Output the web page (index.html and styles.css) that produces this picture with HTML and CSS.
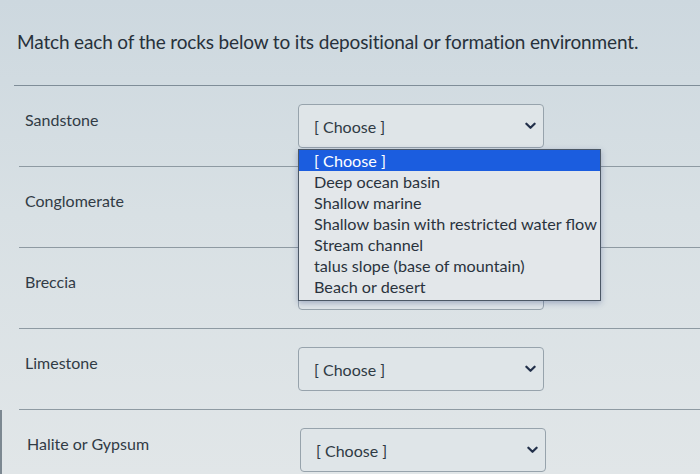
FILE: index.html
```html
<!DOCTYPE html>
<html>
<head>
<meta charset="utf-8">
<link rel="stylesheet" href="styles.css">
</head>
<body>
<div class="page">
  <div class="header">
    <p class="title">Match each of the rocks below to its depositional or formation environment.</p>
  </div>
  <div class="rows">
    <div class="row">
      <div class="label">Sandstone</div>
      <div class="select-wrap">
        <div class="select"><span>[ Choose ]</span><svg class="chev" viewBox="0 0 12 8" width="11" height="8"><path d="M1.5 1.5 L6 6 L10.5 1.5" fill="none" stroke="#22304a" stroke-width="2.4" stroke-linecap="round" stroke-linejoin="round"/></svg></div>
        <ul class="menu">
          <li class="active">[ Choose ]</li>
          <li>Deep ocean basin</li>
          <li>Shallow marine</li>
          <li>Shallow basin with restricted water flow</li>
          <li>Stream channel</li>
          <li>talus slope (base of mountain)</li>
          <li>Beach or desert</li>
        </ul>
      </div>
    </div>
    <div class="row">
      <div class="label">Conglomerate</div>
      <div class="select-wrap">
        <div class="select covered"><span>[ Choose ]</span><svg class="chev" viewBox="0 0 12 8" width="11" height="8"><path d="M1.5 1.5 L6 6 L10.5 1.5" fill="none" stroke="#22304a" stroke-width="2.4" stroke-linecap="round" stroke-linejoin="round"/></svg></div>
      </div>
    </div>
    <div class="row">
      <div class="label">Breccia</div>
      <div class="select-wrap">
        <div class="select covered"><span>[ Choose ]</span><svg class="chev" viewBox="0 0 12 8" width="11" height="8"><path d="M1.5 1.5 L6 6 L10.5 1.5" fill="none" stroke="#22304a" stroke-width="2.4" stroke-linecap="round" stroke-linejoin="round"/></svg></div>
      </div>
    </div>
    <div class="row">
      <div class="label">Limestone</div>
      <div class="select-wrap">
        <div class="select"><span>[ Choose ]</span><svg class="chev" viewBox="0 0 12 8" width="11" height="8"><path d="M1.5 1.5 L6 6 L10.5 1.5" fill="none" stroke="#22304a" stroke-width="2.4" stroke-linecap="round" stroke-linejoin="round"/></svg></div>
      </div>
    </div>
    <div class="row">
      <div class="label">Halite or Gypsum</div>
      <div class="select-wrap">
        <div class="select"><span>[ Choose ]</span><svg class="chev" viewBox="0 0 12 8" width="11" height="8"><path d="M1.5 1.5 L6 6 L10.5 1.5" fill="none" stroke="#22304a" stroke-width="2.4" stroke-linecap="round" stroke-linejoin="round"/></svg></div>
      </div>
    </div>
  </div>
</div>
</body>
</html>
```
FILE: styles.css
```css
html, body {
  margin: 0;
  padding: 0;
}
body {
  width: 700px;
  height: 474px;
  overflow: hidden;
  font-family: Lato, "Open Sans", sans-serif;
  color: #2b3540;
  background: linear-gradient(180deg, #cdd8df 0%, #d8e0e4 45%, #e1e6e8 100%);
}
.page {
  width: 700px;
}
.header {
  height: 86px;
  margin-left: 14px;
  border-bottom: 1px solid #7f8d98;
  box-sizing: border-box;
}
.title {
  margin: 0;
  padding: 30px 0 0 3px;
  font-size: 19px;
  line-height: 24px;
  letter-spacing: -0.15px;
  color: #27313b;
}
.rows {
  display: flex;
  flex-direction: column;
}
.row {
  display: flex;
  align-items: flex-start;
  height: 81px;
  margin-left: 19px;
  border-bottom: 1px solid #8e9aa2;
  box-sizing: border-box;
}
.row:last-child {
  border-bottom: none;
  margin-left: 0;
  border-left: 2px solid #7c8891;
  padding-left: 19px;
}
.label {
  width: 279px;
  padding: 24px 0 0 6px;
  box-sizing: border-box;
  font-size: 16px;
  line-height: 20px;
  color: #313b45;
}
.select-wrap {
  position: relative;
  margin-top: 18px;
}
.select {
  display: flex;
  align-items: center;
  justify-content: space-between;
  width: 246px;
  height: 44px;
  padding: 0 7px 0 15px;
  box-sizing: border-box;
  border: 1px solid #97a3ac;
  border-radius: 4px;
  background: #dfe5e8;
  font-size: 16px;
  color: #2f3a44;
}
.select.covered span {
  visibility: hidden;
}
.chev {
  display: block;
}
.menu {
  position: absolute;
  left: 0;
  top: 45px;
  width: 303px;
  margin: 0;
  padding: 0 0 3px 0;
  list-style: none;
  background: #e3e7ea;
  border: 1px solid #4c5866;
  box-shadow: 0 2px 6px rgba(40, 60, 120, 0.35);
  box-sizing: border-box;
  z-index: 5;
}
.menu li {
  height: 21px;
  line-height: 22px;
  padding-left: 15px;
  font-size: 16.2px;
  color: #2a333d;
  white-space: nowrap;
}
.menu li.active {
  background: #1b5ddf;
  color: #ffffff;
}
```
